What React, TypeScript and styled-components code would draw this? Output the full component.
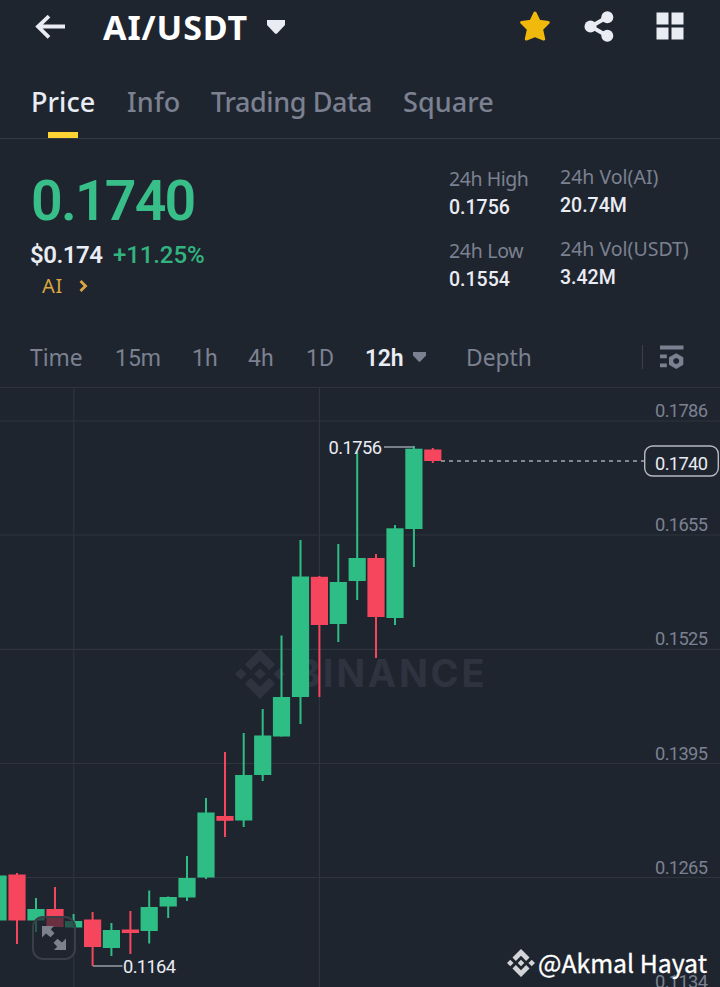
import React from "react";
import styled, { createGlobalStyle } from "styled-components";

const GlobalStyle = createGlobalStyle`
  *, *::before, *::after { box-sizing: border-box; }
  body { margin: 0; background: #1f252f; overflow: hidden; }
  button { border: 0; padding: 0; background: none; font: inherit; color: inherit; }
`;

const text = `"Noto Sans", "Open Sans", sans-serif`;
const digits = `Roboto, "Liberation Sans", sans-serif`;
const muted = "#7b8190";
const bright = "#eaecf3";
const green = "#2ebd85";
const red = "#f6465d";

const Screen = styled.main`
  width: 720px;
  height: 987px;
  display: flex;
  flex-direction: column;
  overflow: hidden;
  background: #1f252f;
  color: ${bright};
  font-family: ${text};
`;

const Header = styled.header`
  height: 53px;
  flex: none;
  display: flex;
  align-items: center;
  padding: 0 36px 0 35px;
`;

const BackButton = styled.button`
  display: flex;
  width: 30px;
  height: 24px;
  margin-right: 38px;
`;

const PairButton = styled.button`
  display: flex;
  align-items: center;
  gap: 17px;
`;

const PairName = styled.h1`
  margin: 0;
  width: 147px;
  font-size: 34px;
  line-height: 40px;
  font-weight: 700;
  letter-spacing: 0.9px;
  text-align: left;
  white-space: nowrap;
  color: #fff;
`;

const Actions = styled.div`
  margin-left: auto;
  display: flex;
  align-items: center;
`;

const Action = styled.button<{ $gap: number }>`
  display: flex;
  margin-left: ${(p) => p.$gap}px;
  margin-bottom: 1px;
`;

const Tabs = styled.nav`
  height: 86px;
  flex: none;
  display: flex;
  padding-left: 32px;
  border-bottom: 1px solid #343a44;
`;

const Tab = styled.button<{ $width: number; $active?: boolean; $spacing: number }>`
  display: flex;
  flex-direction: column;
  justify-content: flex-end;
  width: ${(p) => p.$width}px;
  margin-right: 31px;
  font-size: 27px;
  line-height: 36px;
  font-weight: ${(p) => (p.$active ? 550 : 500)};
  letter-spacing: ${(p) => p.$spacing}px;
  text-align: left;
  text-indent: ${(p) => (p.$active ? -1 : 0)}px;
  white-space: nowrap;
  color: ${(p) => (p.$active ? bright : muted)};
  &::after {
    content: "";
    width: 30px;
    height: 6px;
    margin: 12px 0 0 16px;
    background: ${(p) => (p.$active ? "#fcd535" : "transparent")};
  }
`;

const Summary = styled.section`
  height: 189px;
  flex: none;
  display: flex;
  padding: 26px 0 0 31px;
`;

const Quote = styled.div`
  width: 418px;
`;

const LastPrice = styled.div`
  padding-top: 2px;
  font-family: ${digits};
  font-size: 55.5px;
  line-height: 70px;
  font-weight: 600;
  letter-spacing: -1.8px;
  color: #38bf89;
`;

const QuoteLine = styled.div`
  display: flex;
  gap: 11px;
  margin-top: 3px;
  font-family: ${digits};
  font-size: 24px;
  line-height: 30px;
`;

const Fiat = styled.span`
  width: 72px;
  margin-left: -1px;
  font-weight: 600;
  letter-spacing: -0.5px;
`;

const Change = styled.span`
  color: #31b47f;
  font-weight: 500;
  letter-spacing: -0.1px;
`;

const TagLink = styled.a`
  display: flex;
  align-items: center;
  gap: 16px;
  margin: 3px 0 0 11px;
  font-size: 20px;
  line-height: 26px;
  letter-spacing: 0.7px;
  color: #d9a640;
`;

const StatColumn = styled.div<{ $width: number; $lift: number }>`
  width: ${(p) => p.$width}px;
  margin-top: ${(p) => -p.$lift}px;
`;

const Stat = styled.dl`
  margin: 0 0 16px;
`;

const StatLabel = styled.dt<{ $spacing?: number }>`
  font-size: 19.5px;
  line-height: 28px;
  letter-spacing: ${(p) => p.$spacing ?? 0}px;
  white-space: nowrap;
  color: ${muted};
`;

const StatValue = styled.dd`
  margin: 0;
  padding-top: 1px;
  font-family: ${digits};
  font-size: 19.5px;
  line-height: 27px;
  font-weight: 500;
`;

const Intervals = styled.nav`
  height: 59px;
  flex: none;
  display: flex;
  align-items: center;
  padding: 0 36px 2px 30px;
`;

const Interval = styled.button<{ $width: number; $active?: boolean; $word?: boolean }>`
  width: ${(p) => p.$width}px;
  flex: none;
  display: flex;
  align-items: center;
  gap: 10px;
  padding-top: ${(p) => (p.$word ? 2 : 4)}px;
  font-size: ${(p) => (p.$word ? 22.8 : 23)}px;
  line-height: 30px;
  font-family: ${(p) => (p.$word ? text : digits)};
  font-weight: ${(p) => (p.$active ? 600 : 400)};
  letter-spacing: ${(p) => (p.$active ? -0.3 : 0)}px;
  color: ${(p) => (p.$active ? bright : muted)};
  svg { margin-bottom: 4px; }
`;

const Settings = styled.button`
  display: flex;
  align-items: center;
  gap: 17px;
  margin-left: auto;
  &::before {
    content: "";
    width: 1px;
    height: 24px;
    background: #3b404b;
  }
`;

const ChartPanel = styled.section`
  position: relative;
  height: 600px;
  flex: none;
  svg { display: block; }
`;

const ExpandButton = styled.button`
  position: absolute;
  left: 32px;
  top: 529px;
  width: 44px;
  height: 44px;
  display: grid;
  place-items: center;
  border: 2px solid #393e49;
  border-radius: 11px;
  background: rgba(31, 37, 47, 0.65);
`;

const Author = styled.div`
  position: absolute;
  right: 13px;
  bottom: 5px;
  display: flex;
  align-items: center;
  gap: 3px;
  font-family: "Noto Sans CJK SC", "Noto Sans", sans-serif;
  font-size: 24.8px;
  line-height: 38px;
  font-weight: 400;
  color: #fff;
  -webkit-text-stroke: 0.3px #fff;
  span { padding-bottom: 1px; }
`;

type Candle = [x: number, up: boolean, high: number, top: number, bottom: number, low: number];

const candles: Candle[] = [
  [-2, true, 875.5, 875.5, 920.5, 920.5],
  [17, false, 873, 874.5, 920.5, 944],
  [36, true, 898, 909, 920.5, 932],
  [55, false, 887, 909, 927, 927],
  [73.6, true, 914, 921, 927.5, 928],
  [92.6, false, 912, 919.5, 947, 966],
  [111.4, true, 923, 930, 948, 956],
  [130.4, false, 911, 929.5, 933, 954],
  [149.2, true, 890.5, 907, 931, 943.5],
  [168.2, true, 896.5, 897, 906.5, 918],
  [187, true, 856, 878, 897.5, 901],
  [206, true, 798, 812.5, 877.5, 879],
  [225, false, 752, 816, 820.8, 837],
  [243.7, true, 733, 775, 820.5, 827],
  [262.7, true, 709, 735.5, 775, 781],
  [281.5, true, 635.5, 697, 736.5, 736.5],
  [300.5, true, 540, 576.5, 697, 724],
  [319.4, false, 576, 576.8, 625, 697],
  [338.3, true, 544, 582, 624, 642],
  [357.2, true, 452, 558, 581, 600],
  [376, false, 554, 558, 617, 658],
  [395, true, 525, 528.3, 618, 625],
  [413.9, true, 446, 448.7, 529, 567],
  [432.8, false, 448, 449.5, 461, 463],
];

const priceLevels: [label: string, y: number][] = [
  ["0.1786", 421],
  ["0.1655", 535],
  ["0.1525", 649.4],
  ["0.1395", 763.5],
  ["0.1265", 877.5],
  ["0.1134", 991.7],
];

const markPath =
  "M12 0l7.3 7.3-2.9 2.9L12 5.8l-4.4 4.4-2.9-2.9zM2.8 9.2L5.6 12l-2.8 2.8L0 12zM21.2 9.2L24 12l-2.8 2.8-2.8-2.8zM12 9.2l2.8 2.8-2.8 2.8L9.2 12zM7.6 13.8l4.4 4.4 4.4-4.4 2.9 2.9L12 24l-7.3-7.3z";

const BinanceMark = ({ size, color }: { size: number; color: string }) => (
  <svg width={size} height={size} viewBox="0 0 24 24" fill={color}>
    <path d={markPath} />
  </svg>
);

const Caret = ({ width, height, color }: { width: number; height: number; color: string }) => (
  <svg width={width} height={height} viewBox="0 0 18 14" fill={color} preserveAspectRatio="none">
    <path d="M0 0H18V5L9.8 13.7H8.2L0 5z" />
  </svg>
);

const Chart = () => (
  <svg width="720" height="600" viewBox="0 387 720 600" fontFamily={digits}>
    <g stroke="#2f343f" strokeWidth="1.2">
      <line x1="0" y1="387.5" x2="720" y2="387.5" />
      {priceLevels.map(([label, y]) => (
        <line key={label} x1="0" y1={y} x2="720" y2={y} />
      ))}
      <line x1="73.8" y1="387" x2="73.8" y2="987" />
      <line x1="319.4" y1="387" x2="319.4" y2="987" />
    </g>
    <g fill="#2e333f">
      <svg x="235" y="649" width="50" height="50" viewBox="0 0 24 24">
        <path d={markPath} />
      </svg>
      <text x="295" y="687" fontFamily="Inter, sans-serif" fontWeight="750" fontSize="38" textLength="189.500">
        BINANCE
      </text>
    </g>
    {candles.map(([x, up, high, top, bottom, low]) => (
      <g key={x} fill={up ? green : red}>
        <rect x={x - 1} y={high} width="2" height={low - high} />
        <rect x={x - 8.6} y={top} width="17.2" height={bottom - top} />
      </g>
    ))}
    <path d="M384 447H414M93 966H122.500" stroke="#989da8" strokeWidth="1.5" fill="none" />
    <line x1="441" y1="461" x2="645" y2="461" stroke="#a3a7b0" strokeWidth="1.5" strokeDasharray="4 4" />
    <rect x="644.7" y="446" width="73.6" height="30" rx="8" fill="#1f252f" stroke="#b4b8c1" strokeWidth="1.4" />
    <g fontSize="18.300">
      {priceLevels.map(([label, y]) => (
        <text key={label} x="655" y={y - 4} textLength="53" fill={muted}>
          {label}
        </text>
      ))}
      <g fill={bright}>
        <text x="655" y="470" textLength="53">0.1740</text>
        <text x="328.500" y="454.300" textLength="53.500">0.1756</text>
        <text x="123" y="973" textLength="53">0.1164</text>
      </g>
    </g>
  </svg>
);

export default function App() {
  return (
    <Screen>
      <GlobalStyle />
      <Header>
        <BackButton aria-label="Back">
          <svg width="30" height="24" viewBox="0 0 30 24" fill="none" stroke={bright} strokeWidth="3.8">
            <path d="M30 11.500H3M14 1.200L3 11.500L14 22.300" />
          </svg>
        </BackButton>
        <PairButton>
          <PairName>AI/USDT</PairName>
          <Caret width={18} height={14} color={bright} />
        </PairButton>
        <Actions>
          <Action $gap={0} aria-label="Favorite">
            <svg width="30" height="30" viewBox="0 0 30 30" fill="#f0b90b" stroke="#f0b90b" strokeWidth="3" strokeLinejoin="round">
              <path d="M15 2L19 10.200L28.300 11.400L21.600 18.200L23.700 28L15 24.500L6.300 28L8.400 18.200L1.700 11.400L11 10.200z" />
            </svg>
          </Action>
          <Action $gap={34} aria-label="Share">
            <svg width="30" height="31" viewBox="0 0 30 31" fill={bright}>
              <path d="M23 6.200L7 15.500L23 24.700" fill="none" stroke={bright} strokeWidth="4" />
              <circle cx="23.300" cy="6.200" r="6" />
              <circle cx="6.500" cy="15.500" r="6" />
              <circle cx="23.300" cy="24.800" r="6" />
            </svg>
          </Action>
          <Action $gap={42} aria-label="Layout">
            <svg width="28" height="28" viewBox="0 0 28 28" fill={bright}>
              <path d="M.5.5h12v12H.5zM15.500.5h12v12h-12zM.5 15.500h12v12H.5zM15.500 15.500h12v12h-12z" />
            </svg>
          </Action>
        </Actions>
      </Header>

      <Tabs>
        <Tab $width={64} $spacing={0.1} $active>Price</Tab>
        <Tab $width={53} $spacing={0.2}>Info</Tab>
        <Tab $width={161} $spacing={-0.4}>Trading Data</Tab>
        <Tab $width={92} $spacing={0.1}>Square</Tab>
      </Tabs>

      <Summary>
        <Quote>
          <LastPrice>0.1740</LastPrice>
          <QuoteLine>
            <Fiat>$0.174</Fiat>
            <Change>+11.25%</Change>
          </QuoteLine>
          <TagLink>
            AI
            <svg width="9" height="12" viewBox="0 0 9 12" fill="none" stroke="#d9a640" strokeWidth="2.800">
              <path d="M1.500 1L6.500 6L1.500 11" />
            </svg>
          </TagLink>
        </Quote>
        <StatColumn $width={111} $lift={0}>
          <Stat>
            <StatLabel $spacing={-0.45}>24h High</StatLabel>
            <StatValue>0.1756</StatValue>
          </Stat>
          <Stat>
            <StatLabel $spacing={-0.3}>24h Low</StatLabel>
            <StatValue>0.1554</StatValue>
          </Stat>
        </StatColumn>
        <StatColumn $width={140} $lift={2}>
          <Stat>
            <StatLabel>24h Vol(AI)</StatLabel>
            <StatValue>20.74M</StatValue>
          </Stat>
          <Stat>
            <StatLabel>24h Vol(USDT)</StatLabel>
            <StatValue>3.42M</StatValue>
          </Stat>
        </StatColumn>
      </Summary>

      <Intervals>
        <Interval $width={85} $word>Time</Interval>
        <Interval $width={77}>15m</Interval>
        <Interval $width={56}>1h</Interval>
        <Interval $width={58}>4h</Interval>
        <Interval $width={59}>1D</Interval>
        <Interval $width={101} $active>
          12h
          <Caret width={13} height={10} color={muted} />
        </Interval>
        <Interval $width={66} $word>Depth</Interval>
        <Settings aria-label="Chart settings">
          <svg width="24" height="24" viewBox="0 0 24 24" fill={muted}>
            <path d="M0 .5h23.500v4H0zM0 9.500h6.800v3.800H0zM0 18.500h6.800v3.800H0z" />
            <path fillRule="evenodd" d="M16.200 8.300L23.300 12.300V19.800L16.200 23.900L9 19.800V12.300zM16.200 13a3 3 0 1 0 .01 0z" />
          </svg>
        </Settings>
      </Intervals>

      <ChartPanel>
        <Chart />
        <ExpandButton aria-label="Expand chart">
          <svg width="26" height="26" viewBox="0 0 26 26" fill="#7c818d">
            <path d="M1 1H13L9.800 4.200L13.500 8.200L9.500 12.200L5 8.500L1 12.500zM25 25H13L16.200 21.800L12.500 17.800L16.500 13.800L21 17.500L25 13.500z" />
          </svg>
        </ExpandButton>
        <Author>
          <BinanceMark size={28} color="#d2d4d8" />
          <span>@Akmal Hayat</span>
        </Author>
      </ChartPanel>
    </Screen>
  );
}
